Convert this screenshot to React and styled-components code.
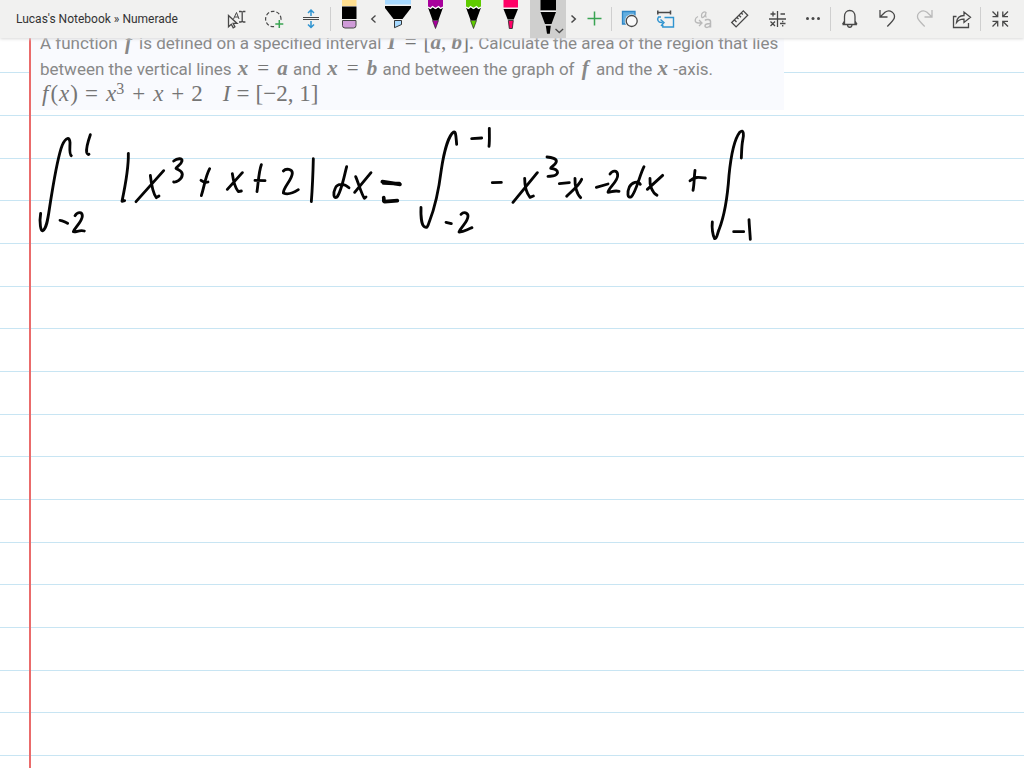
import React from 'react';
import styled, { createGlobalStyle } from 'styled-components';

const Global = createGlobalStyle`
  * { box-sizing: border-box; }
  body { margin: 0; background: #fff; }
`;

const Page = styled.div`
  min-height: 100vh;
  display: flex;
  flex-direction: column;
  overflow: hidden;
`;

const Toolbar = styled.header`
  position: sticky;
  top: 0;
  z-index: 1;
  display: flex;
  align-items: center;
  height: 38px;
  flex: none;
  background: #f1f1f0;
  box-shadow: 0 1px 3px #d8d8d8;
`;

const Title = styled.h1`
  margin: 0;
  flex: 0 0 217px;
  padding-left: 16px;
  font: 400 12px/20px Roboto, "Open Sans", sans-serif;
  color: #333;
  white-space: nowrap;
`;

const Tool = styled.button`
  flex: none;
  width: ${(p) => p.$w}px;
  height: 38px;
  padding: 0;
  border: 0;
  background: ${(p) => (p.$active ? '#cfcfce' : 'transparent')};
  color: ${(p) => (p.$muted ? '#b9b9b9' : '#484848')};
`;

const Glyph = styled.svg`
  display: block;
  fill: none;
  stroke: currentColor;
  stroke-width: 1.3;
`;

const Divider = styled.span`
  flex: none;
  width: 1px;
  height: 24px;
  background: #cfcfcf;
`;

const Paper = styled.main`
  flex: 1;
  color: #858585;
  background:
    linear-gradient(#ea6b6b, #ea6b6b) 29px 0 / 2px 100% no-repeat,
    repeating-linear-gradient(
      #c8e5f3 0 1px, transparent 1px 43px,
      #c8e5f3 43px 44px, transparent 44px 86px,
      #c8e5f3 86px 87px, transparent 87px 128px
    ) 0 -94px / 100% 1280px;
`;

const Problem = styled.section`
  width: fit-content;
  min-width: 753px;
  height: 84px;
  margin: -12px 0 0 31px;
  padding: 4px 4px 0 9px;
  background: #f9fafe;
  font: 400 17px/26px Roboto, sans-serif;
  color: #888;
`;

const Line = styled.p`
  margin: 0;
  height: 26px;
  white-space: nowrap;
`;

const MathText = styled.span`
  font-family: "Liberation Serif", serif;
  font-size: ${(p) => p.$size || 21}px;
  font-style: ${(p) => (p.$upright ? 'normal' : 'italic')};
  font-weight: ${(p) => (p.$bold ? 700 : 400)};
  line-height: 20px;
  margin: 0 ${(p) => p.$gap || 0}px;
  color: ${(p) => (p.$bold ? '#888' : '#757575')};
`;

const Formula = styled(Line)`
  ${MathText} { font-size: 23px; }
`;

const Interval = styled.span`
  margin-left: 20px;
`;

const Power = styled.sup`
  font-size: 16px;
  font-style: normal;
  line-height: 0;
  vertical-align: 7px;
`;

const Ink = styled.svg`
  display: block;
  margin-top: 5px;
  fill: none;
  stroke: #050505;
  stroke-width: 8.5;
  stroke-linecap: round;
  stroke-linejoin: round;
`;

function ToolButton({ label, w = 37, active, muted, children }) {
  return (
    <Tool type="button" aria-label={label} title={label} $w={w} $active={active} $muted={muted}>
      <Glyph width={w} height="38" viewBox={`0 0 ${w} 38`} aria-hidden="true">{children}</Glyph>
    </Tool>
  );
}

function Pencil({ color }) {
  return (
    <g stroke="none">
      <path d="M12 0h15v7l-2.5 1.5-2-2-3 2-3-2-2 2L12 7z" fill={color} />
      <path d="M12 7.5l2.5 1.5 2-2 3 2 3-2 2 2 2.500-1.5L22.5 20h-6z" fill="#000" />
      <path d="M12 7l2.5 1.5 2-2 3 2 3-2 2 2L27 7" stroke="#fff" strokeWidth="1.2" />
      <path d="M16.5 20.5h6L19.5 28.5z" fill={color} stroke="#222" strokeWidth=".7" />
    </g>
  );
}

function Bar() {
  return (
    <Toolbar>
      <Title>Lucas's Notebook » Numerade</Title>
      <ToolButton label="Text select" w={38}>
        <path d="M11.500 15.500v11.200l2.800-2.500 1.900 3.600 1.700-1-1.800-3.400h4z" />
        <path d="M16.500 19l3-6.500 2.500 6.500M17.500 17h3.700" strokeWidth="1" />
        <path d="M22 11.500h2l1.200.8 1.200-.8h2M25.200 12v9.500M22 22h2l1.200-.8 1.200.8h2" />
      </ToolButton>
      <ToolButton label="Lasso select" w={38}>
        <circle cx="18.3" cy="19" r="7.7" strokeDasharray="3.6 2" strokeWidth="1.2" />
        <circle cx="24.3" cy="24" r="4.5" fill="#f1f1f0" stroke="none" />
        <path d="M20.300 24h8M24.300 20v8" stroke="#39a452" strokeWidth="1.5" />
      </ToolButton>
      <ToolButton label="Insert space" w={37}>
        <path d="M10 17.500h16M10 19.500h16" strokeWidth="1.1" />
        <path d="M18 16v-5.500M15 13l3-3 3 3M18 21v6M15 24.500l3 3 3-3" stroke="#2f94d0" strokeWidth="1.5" />
      </ToolButton>
      <Divider />
      <ToolButton label="Eraser" w={37}>
        <path d="M11 0h14.500v6H11z" fill="#ffdf91" stroke="none" />
        <path d="M11 6.500h14.500v12.500H11z" fill="#000" stroke="none" />
        <path d="M11.500 20.500h13.500v5a2.500 2.500 0 0 1-2.500 2.500h-8.500a2.500 2.500 0 0 1-2.500-2.500z" fill="#cf9bd8" stroke="#444" strokeWidth="1" />
      </ToolButton>
      <ToolButton label="Previous pens" w={10}><path d="M7.500 15.500L3.700 19l3.800 3.500" /></ToolButton>
      <ToolButton label="Highlighter" w={38}>
        <path d="M7 0h26v4.500H7z" fill="#a7d9ff" stroke="none" />
        <path d="M7 6h26v2l-8.500 11h-9L7 8z" fill="#000" stroke="none" />
        <path d="M16.500 20.500h7v4l-7 3.200z" fill="#a7d9ff" stroke="#222" strokeWidth=".9" />
      </ToolButton>
      <ToolButton label="Purple pencil" w={38}><Pencil color="#a8009c" /></ToolButton>
      <ToolButton label="Green pencil" w={38}><Pencil color="#5fcb00" /></ToolButton>
      <ToolButton label="Pink pen" w={38}>
        <path d="M11.500 0H26v7.500H11.500z" fill="#ff0066" stroke="none" />
        <path d="M11.500 9H26l-4.300 10.500h-6z" fill="#000" stroke="none" />
        <path d="M16.300 20.500h5l-1 8h-3z" fill="#ff0066" stroke="#222" strokeWidth=".8" />
      </ToolButton>
      <ToolButton label="Black pen" w={36} active>
        <path d="M10.500 0H26v10.500H10.500z" fill="#000" stroke="none" />
        <path d="M10.500 11.200H26" stroke="#fff" strokeWidth="1.1" />
        <path d="M10.500 12H26l-4.500 12h-6.500z" fill="#000" stroke="none" />
        <path d="M15.800 25.800h5l-1 8h-2.800z" fill="#000" stroke="none" />
        <path d="M25.500 29l3.800 3.500 3.800-3.500" />
      </ToolButton>
      <ToolButton label="Next pens" w={14}><path d="M5.500 15.500L9.300 19l-3.800 3.500" strokeWidth="1.5" /></ToolButton>
      <ToolButton label="Add pen" w={31}><path d="M7.500 18.500h14M14.500 11.500v14" stroke="#39a452" strokeWidth="1.5" /></ToolButton>
      <Divider />
      <ToolButton label="Shapes">
        <path d="M10.500 11.500H23v12.500H10.500z" fill="#62aee0" stroke="#2f86c5" />
        <circle cx="19.7" cy="21" r="6.8" fill="#f1f1f0" stroke="none" />
        <circle cx="19.7" cy="21" r="5.5" fill="#fafafa" />
      </ToolButton>
      <ToolButton label="Ink to shape">
        <path d="M9 12.500h12.500M8.800 10.500v4M21.500 10.500v4" strokeWidth="1.5" />
        <path d="M15.500 17.500h9v9.500H13.800v-2M12 17H9.500c-1.500 2-1 6 4 5.500M11.500 19.500l3.500 3-3 3.500" stroke="#2f94d0" strokeWidth="1.4" />
      </ToolButton>
      <ToolButton label="Ink to text" muted>
        <path d="M16 17.500c2 .5 4-3 4-5-2-1.500-4.500.5-4.500 3 0 1.300.3 1.800.5 2zM20 12.500c-.8 3-.5 4.500.5 4.500" />
        <path d="M19 20.500c1-1.500 5.500-1.500 5.500 1v6M24.500 23.500c-3 0-5.500.5-5.500 2.500s4.500 2 5.500-1" strokeWidth="1.5" />
        <path d="M12 16.500c-3.500 1.500-4 6 0 6.500h3M13 20l3 3-3 3" />
      </ToolButton>
      <ToolButton label="Ruler">
        <path d="M8.700 22.500L20.300 10.900l4.400 4.400L13.100 26.900zM11.500 20l2 2M14 17.500l1.500 1.500M16 15.200l2 2M18.300 13l1.500 1.500" />
      </ToolButton>
      <ToolButton label="Math">
        <path d="M17.500 11v16M9 19h17M10.500 14h5M13 11.500v5M20.500 14h4.500M10.500 21.500l4.500 4.500M15 21.500l-4.500 4.500M20 23.500h5.500M22.700 20.700v1.500M22.700 25v1.500" />
      </ToolButton>
      <ToolButton label="More" w={33}>
        <g fill="currentColor" stroke="none"><circle cx="10.5" cy="18.5" r="1.5" /><circle cx="16" cy="18.5" r="1.5" /><circle cx="21.5" cy="18.5" r="1.5" /></g>
      </ToolButton>
      <Divider />
      <ToolButton label="Notifications">
        <path d="M11.500 24.500h14.500M13.500 24V16.500c0-3.500 2.200-6 5.300-6s5.200 2.500 5.200 6V24M13.500 21l-2 3.300M24 21l2 3.300M16.500 25c.3 3 4.200 3 4.500 0" />
      </ToolButton>
      <ToolButton label="Undo"><path d="M12 10v7h7.500M12 17l5-4.700c5-3.800 10.500 1 9.300 5.700-.5 2-2.300 3.800-7 8.500" /></ToolButton>
      <ToolButton label="Redo" muted><path d="M27 10v7h-7.500M27 17l-5-4.700c-5-3.800-10.500 1-9.300 5.700.5 2 2.300 3.800 7 8.500" /></ToolButton>
      <ToolButton label="Share" w={38}>
        <path d="M14.500 16.500h-3v11H26.500v-4.500" />
        <path d="M14.500 22.500c.5-4.500 3.500-7 7.500-7v-3.500l6.500 5.300-6.500 5.200v-3.300c-3.500-.2-5.500.8-7.500 3.300z" />
      </ToolButton>
      <Divider />
      <ToolButton label="Exit full page">
        <path d="M11.500 11.500l5 5M16.700 11.500v5.200h-5.200M27 11.500l-5 5M21.800 11.500v5.200H27M11.500 26.500l5-5M16.700 26.500v-5.200h-5.200M27 26.500l-5-5M21.800 26.500v-5.200H27" />
      </ToolButton>
    </Toolbar>
  );
}

function Handwriting() {
  return (
    <Ink width="770" height="140" viewBox="0 0 2310 420" role="img" aria-label="Handwritten integral of |x³ + x + 2| from −2 to 1, split at −1">
      <g transform="translate(60)">
        <path d="M62 295C57 325 63 350 68 347C82 340 85 300 91 263C101 202 112 127 127 90C138 66 149 65 150 83C150 97 147 118 154 122" />
        <path d="M211 59C203 82 198 100 200 112C202 118 205 119 207 118M120 316C129 316 135 322 143 325M165 302C173 290 187 290 187 303C187 319 164 339 160 350C169 352 178 344 193 348" />
        <path d="M325 115C326 157 317 207 306 259L314 257M391 181C394 207 398 234 409 248L417 243M431 167L348 260" />
        <path d="M461 138C473 128 488 130 486 138C484 149 469 155 468 160C475 166 486 166 487 178C486 194 468 202 461 201M569 161C556 185 553 214 544 242M543 196C551 202 559 203 564 201" />
      </g>
      <g transform="translate(660)">
        <path d="M37 176C40 198 48 222 55 230L64 228M67 173L22 223M124 149C116 171 115 203 111 230M105 196L135 197" />
        <path d="M190 168C198 159 217 162 217 174C217 194 190 216 190 234C201 239 218 235 235 224M280 131C279 175 277 220 274 260" />
        <path d="M380 155C373 181 364 231 351 246C340 253 339 234 346 219C353 203 374 206 387 218M407 185C416 206 424 236 433 250L438 246M453 173L404 232" />
        <path d="M487 200L540 208M491 204L538 206M491 248C493 254 489 260 494 260L532 257" strokeWidth="11" />
      </g>
      <g transform="translate(1230)">
        <path d="M33 277C32 303 35 331 43 335C50 340 53 337 58 320C76 275 87 219 94 164C102 110 116 61 131 51C138 48 138 68 140 88" />
        <path d="M185 71L215 69M238 40C238 61 239 80 237 94M108 322L124 326M153 298C162 288 174 294 174 303C174 321 154 334 147 351C160 352 168 345 186 338" />
        <path d="M247 203L274 202M344 190C344 211 350 235 360 247L370 243M382 173L309 262M411 126C426 127 440 132 439 139C438 150 422 155 422 160C434 161 445 165 442 175C438 185 426 183 414 184" />
        <path d="M448 206L478 203M495 190C494 212 500 237 512 248M515 193C505 215 485 228 470 244" />
      </g>
      <g transform="translate(1740)">
        <path d="M49 217L84 207M90 177C99 164 113 166 113 181C114 199 84 220 84 232C94 232 102 225 117 229M192 155C179 180 168 232 154 245C142 252 141 232 148 216C155 202 175 196 181 208M210 190C208 211 217 233 231 241M248 181L202 223" />
        <path d="M345 166C342 187 343 208 339 226M330 197C344 184 359 187 376 189" />
        <path d="M397 321C395 338 398 361 404 371C411 372 411 358 417 344C435 298 443 239 447 181C452 130 461 75 479 52C492 40 492 61 488 77C485 91 485 110 484 129M461 350L491 350M507 314C508 335 510 355 511 373" />
      </g>
    </Ink>
  );
}

export default function App() {
  return (
    <Page>
      <Global />
      <Bar />
      <Paper>
        <Problem>
          <Line>
            A function <MathText $bold $gap={3}>f</MathText> is defined on a specified interval <MathText $bold $gap={2}>I</MathText>
            <MathText $upright $gap={7}>=</MathText><MathText $upright>[</MathText><MathText $bold>a</MathText><MathText $upright>, </MathText><MathText $bold>b</MathText><MathText $upright>]</MathText>
            <b>.</b> Calculate the area of the region that lies
          </Line>
          <Line>
            between the vertical lines <MathText $bold $gap={2}>x</MathText><MathText $upright $gap={7}>=</MathText><MathText $bold $gap={1}>a</MathText> and <MathText $bold $gap={2}>x</MathText>
            <MathText $upright $gap={7}>=</MathText><MathText $bold $gap={1}>b</MathText> and between the graph of <MathText $bold $gap={3}>f</MathText> and the <MathText $bold $gap={1}>x</MathText> -axis.
          </Line>
          <Formula>
            <MathText $gap={2}>f</MathText><MathText $upright>(</MathText><MathText $gap={1}>x</MathText><MathText $upright>)</MathText>
            <MathText $upright $gap={7}>=</MathText><MathText $gap={1}>x<Power>3</Power></MathText>
            <MathText $upright $gap={7}>+</MathText><MathText $gap={1}>x</MathText><MathText $upright $gap={7}>+</MathText><MathText $upright>2</MathText>
            <Interval><MathText>I</MathText><MathText $upright $gap={6}>=</MathText><MathText $upright>[−2, 1]</MathText></Interval>
          </Formula>
        </Problem>
        <Handwriting />
      </Paper>
    </Page>
  );
}
